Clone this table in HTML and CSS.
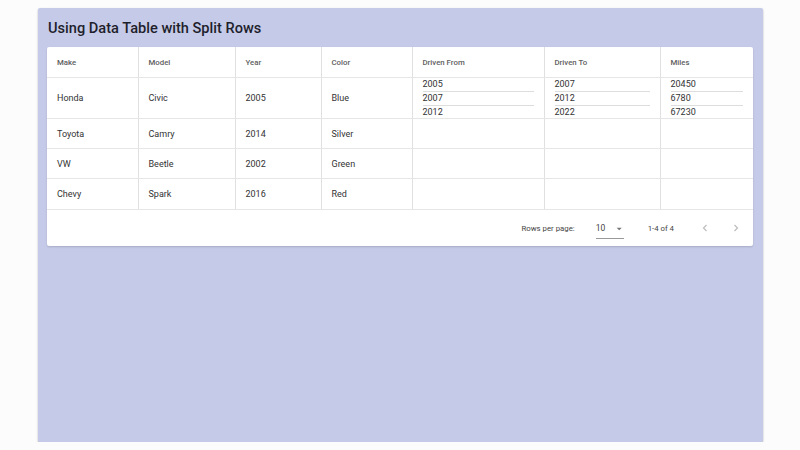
FILE: index.html
```html
<!DOCTYPE html>
<html>
<head>
<meta charset="utf-8">
<link rel="stylesheet" href="styles.css">
</head>
<body>
<div class="panel">
  <h1 class="title">Using Data Table with Split Rows</h1>
  <div class="card">
    <table class="grid">
      <colgroup>
        <col style="width:91px"><col style="width:97px"><col style="width:86px"><col style="width:91px"><col style="width:132px"><col style="width:116px"><col style="width:93px">
      </colgroup>
      <thead>
        <tr><th>Make</th><th>Model</th><th>Year</th><th>Color</th><th>Driven From</th><th>Driven To</th><th>Miles</th></tr>
      </thead>
      <tbody>
        <tr class="tall">
          <td>Honda</td><td>Civic</td><td>2005</td><td>Blue</td>
          <td><div class="split"><span>2005</span><span>2007</span><span>2012</span></div></td>
          <td><div class="split"><span>2007</span><span>2012</span><span>2022</span></div></td>
          <td><div class="split"><span>20450</span><span>6780</span><span>67230</span></div></td>
        </tr>
        <tr><td>Toyota</td><td>Camry</td><td>2014</td><td>Silver</td><td></td><td></td><td></td></tr>
        <tr><td>VW</td><td>Beetle</td><td>2002</td><td>Green</td><td></td><td></td><td></td></tr>
        <tr class="last"><td>Chevy</td><td>Spark</td><td>2016</td><td>Red</td><td></td><td></td><td></td></tr>
      </tbody>
    </table>
    <div class="footer">
      <span class="rpp">Rows per page:</span>
      <span class="select"><span>10</span><svg width="10" height="10" viewBox="0 0 10 10"><path d="M2 3.5 L5 6.5 L8 3.5 Z" fill="#757575"/></svg></span>
      <span class="range">1-4 of 4</span>
      <span class="nav">
        <svg width="12" height="12" viewBox="0 0 12 12"><path d="M7.5 3 L4.5 6 L7.5 9" fill="none" stroke="#bdbdbd" stroke-width="1.2"/></svg>
      </span>
      <span class="nav">
        <svg width="12" height="12" viewBox="0 0 12 12"><path d="M4.5 3 L7.5 6 L4.5 9" fill="none" stroke="#bdbdbd" stroke-width="1.2"/></svg>
      </span>
    </div>
  </div>
</div>
</body>
</html>
```
FILE: styles.css
```css
html, body {
  margin: 0;
  padding: 0;
  background: #fcfcfc;
  font-family: Roboto, "Liberation Sans", sans-serif;
}
.panel {
  margin: 8px 0 0 38px;
  width: 725px;
  height: 434px;
  box-sizing: border-box;
  background: #c5cae9;
  padding: 0 10px 0 9px;
  box-shadow: 0 1px 2px rgba(0,0,0,0.3);
  border-radius: 2px;
}
.title {
  margin: 0;
  padding: 10px 0 0 1px;
  height: 39px;
  box-sizing: border-box;
  font-size: 14.6px;
  font-weight: 500;
  color: #1f1f2c;
  line-height: 20px;
}
.card {
  background: #fff;
  width: 706px;
  border-radius: 2px;
  box-shadow: 0 1px 2px rgba(0,0,0,0.15);
}
.grid {
  border-collapse: collapse;
  table-layout: fixed;
  width: 706px;
}
.grid th, .grid td {
  text-align: left;
  padding: 0 10px;
  border-left: 1px solid #e0e0e0;
  border-bottom: 1px solid #e6e6e6;
  color: #333;
  font-size: 9px;
}
.grid th:first-child, .grid td:first-child { border-left: none; }
.grid th {
  height: 30px;
  font-size: 7.8px;
  font-weight: 500;
  color: #606060;
}
.grid td { height: 29px; }
.grid tr.tall td { height: 40px; }
.grid tr.last td { height: 30px; }
.split {
  display: flex;
  flex-direction: column;
  margin: -1px 0 -2px;
}
.split span {
  height: 14px;
  line-height: 13px;
  border-bottom: 1px solid #ddd;
  box-sizing: border-box;
}
.split span:last-child { border-bottom: none; height: 13px; }
.footer {
  height: 36px;
  display: flex;
  align-items: center;
  justify-content: flex-end;
  font-size: 7.8px;
  color: #444;
  padding-right: 2px;
}
.rpp { margin-right: 21px; }
.select {
  display: flex;
  align-items: center;
  gap: 10px;
  width: 28px;
  height: 18px;
  border-bottom: 1px solid #999;
  margin-top: 3px;
  margin-right: 24px;
  font-size: 8.5px;
}
.select span { margin-top: -3px; }
.range { margin-right: 15px; }
.nav {
  width: 31px;
  display: flex;
  justify-content: center;
}
```
